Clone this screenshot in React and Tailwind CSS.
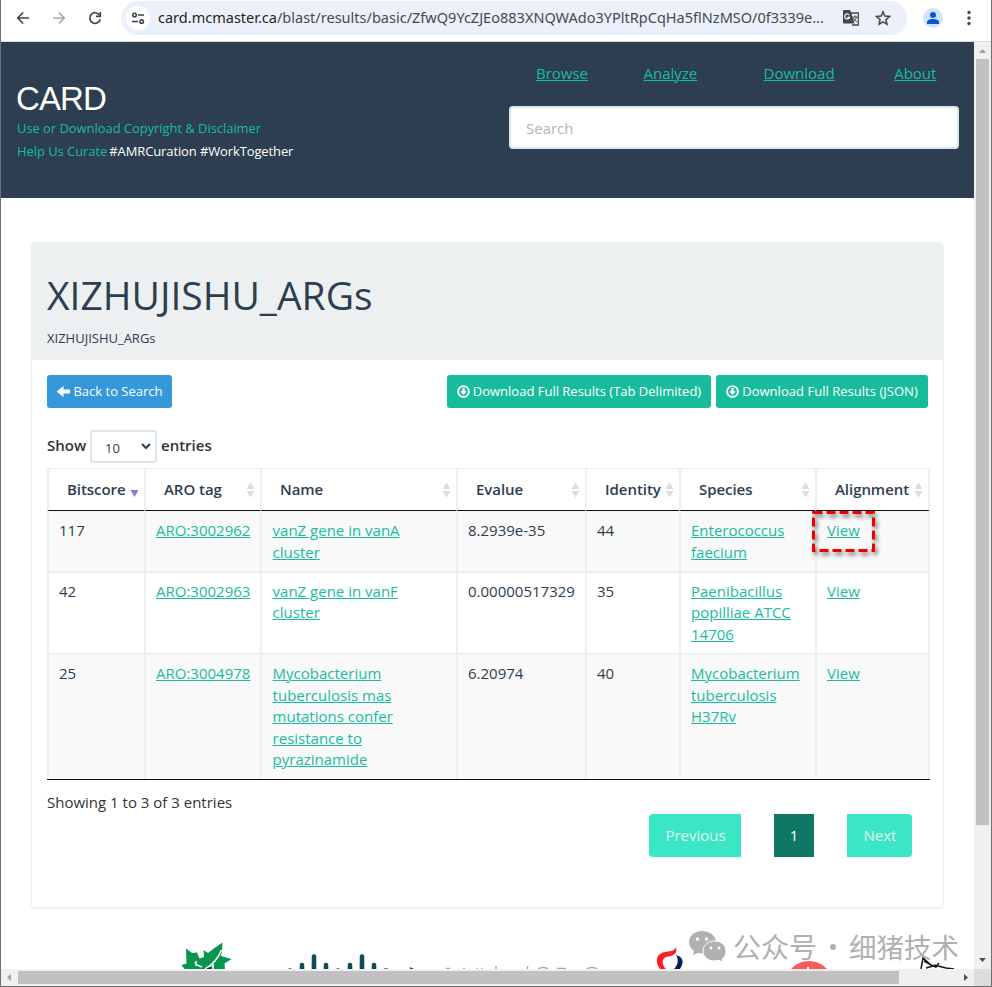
const columns = [
  { label: 'Bitscore', width: 'w-[97px]', sorted: true },
  { label: 'ARO tag', width: 'w-[116px]' },
  { label: 'Name', width: 'w-[196px]' },
  { label: 'Evalue', width: 'w-[129px]' },
  { label: 'Identity', width: 'w-[94px]' },
  { label: 'Species', width: 'w-[136px]' },
  { label: 'Alignment', width: 'w-[115px]' },
];

const rows = [
  {
    bitscore: '117',
    aro: 'ARO:3002962',
    name: ['vanZ gene in vanA', 'cluster'],
    evalue: '8.2939e-35',
    identity: '44',
    species: ['Enterococcus', 'faecium'],
    height: 'h-[62px] [&_td]:pt-[9.300px]',
    marked: true,
  },
  {
    bitscore: '42',
    aro: 'ARO:3002963',
    name: ['vanZ gene in vanF', 'cluster'],
    evalue: '0.00000517329',
    identity: '35',
    species: ['Paenibacillus', 'popilliae ATCC', '14706'],
    height: 'h-[82px] [&_td]:pt-[8px]',
  },
  {
    bitscore: '25',
    aro: 'ARO:3004978',
    name: ['Mycobacterium', 'tuberculosis mas', 'mutations confer', 'resistance to', 'pyrazinamide'],
    evalue: '6.20974',
    identity: '40',
    species: ['Mycobacterium', 'tuberculosis', 'H37Rv'],
    height: 'h-[124px] [&_td]:pt-[8.200px]',
  },
];

const TextLink = ({ children }) => (
  <a className="text-[#18bc9c] underline underline-offset-1 decoration-1 cursor-pointer">{children}</a>
);

const LinkLines = ({ lines }) =>
  lines.map((line) => (
    <div key={line} className="whitespace-nowrap">
      <TextLink>{line}</TextLink>
    </div>
  ));

const SortIcon = ({ sorted }) =>
  sorted ? (
    <svg width="9" height="16" viewBox="0 0 9 16" className="shrink-0">
      <path d="M0.500 8h8L4.500 15z" fill="#7b7fe0" />
    </svg>
  ) : (
    <svg width="9" height="16" viewBox="0 0 9 16" className="shrink-0">
      <path d="M0.500 7h8L4.500 0.500zM0.500 9h8L4.500 15.500z" fill="#dcdcdc" />
    </svg>
  );

const DownloadIcon = () => (
  <svg width="13" height="13" viewBox="0 0 13 13" className="shrink-0">
    <circle cx="6.500" cy="6.500" r="5.400" fill="none" stroke="#fff" strokeWidth="1.800" />
    <path d="M5.300 3h2.400v3.200h2.100L6.500 9.900 3.200 6.200h2.100z" fill="#fff" />
  </svg>
);

const Toolbar = () => (
  <div className="flex h-[42px] shrink-0 items-start border-b border-[#d8dadd] bg-white">
    <div className="flex h-9 w-[120px] shrink-0 items-center pl-[14px]">
      <svg width="90" height="16" viewBox="0 0 90 16" fill="none" stroke="#474747" strokeWidth="1.700">
        <path d="M14 8H3M8.200 2.500L2.700 8l5.500 5.500" />
        <path d="M38 8h11M43.800 2.500L49.300 8l-5.500 5.500" stroke="#a9a9a9" />
        <path d="M84.700 5.300A5.300 5.300 0 1 0 85.300 9.200" />
        <path d="M85.300 2v4.300H81" />
      </svg>
    </div>
    <div className="mt-px flex h-[34px] w-[786px] shrink-0 items-center rounded-full bg-[#ebf0fa] pl-[5px]">
      <div className="flex h-6 w-6 items-center justify-center rounded-full bg-white">
        <svg width="14" height="14" viewBox="0 0 14 14" fill="none" stroke="#3c4043" strokeWidth="1.500">
          <circle cx="3.500" cy="4" r="1.800" />
          <path d="M7 4h6M1 10.500h6" />
          <circle cx="10.700" cy="10.500" r="1.800" />
        </svg>
      </div>
      <div className="ml-2 w-[668px] whitespace-nowrap font-['Noto_Sans','Open_Sans',sans-serif] text-[14.530px] text-[#474a4e]">
        <span className="text-[#1f1f1f]">card.mcmaster.ca</span>/blast/results/basic/ZfwQ9YcZJEo883XNQWAdo3YPltRpCqHa5flNzMSO/0f3339e...
      </div>
      <svg width="18" height="18" viewBox="0 0 18 18" className="ml-4">
        <path d="M1 1h7l1.500 3.500 3 10H2a1 1 0 0 1-1-1z" fill="#474747" />
        <path d="M9 4h7.300v12H10" fill="none" stroke="#474747" strokeWidth="1.300" />
        <path d="M7.300 6.200A2.500 2.500 0 1 0 7.500 8.300H5.300" fill="none" stroke="#fff" strokeWidth="1.200" />
        <path d="M10.500 8h5M13 6.500V8M14.500 8c-.5 2-2 3.500-3.200 4.400M11.500 9c.5 1.500 2 3 3.300 3.700" fill="none" stroke="#474747" />
      </svg>
      <svg width="16" height="16" viewBox="0 0 16 16" className="ml-[15px]" fill="none" stroke="#474747" strokeWidth="1.500">
        <path d="M8 1.800l1.800 4.300 4.700.4-3.600 3.100 1.100 4.600L8 11.800l-4 2.400 1.100-4.600-3.600-3.100 4.700-.4z" />
      </svg>
    </div>
    <div className="ml-4 mt-2 flex h-5 w-5 items-center justify-center rounded-full bg-[#d3e3fd]">
      <svg width="12" height="12" viewBox="0 0 12 12" fill="#0b57d0">
        <circle cx="6" cy="3" r="3" />
        <path d="M0 12V10c0-2 3-3 6-3s6 1 6 3v2z" />
      </svg>
    </div>
    <svg width="4" height="16" viewBox="0 0 4 16" className="ml-[24px] mt-[10px]" fill="#474747">
      <circle cx="2" cy="2.500" r="1.700" />
      <circle cx="2" cy="8" r="1.700" />
      <circle cx="2" cy="13.500" r="1.700" />
    </svg>
  </div>
);

const Header = () => (
  <header className="flex h-[156px] bg-[#2c3e50]">
    <div className="w-[508px] pl-4 pt-[38px]">
      <h1 className="-ml-px font-['Liberation_Sans',sans-serif] text-[33px] leading-[37px] tracking-[-0.900px] text-white">CARD</h1>
      <div className="text-[13px] leading-[23px] tracking-[-0.060px] text-[#18bc9c]">Use or Download Copyright &amp; Disclaimer</div>
      <div className="text-[13px] leading-[23px] tracking-[-0.060px] text-[#18bc9c]">
        Help Us Curate<span className="ml-[2px] tracking-[-0.120px] text-white">#AMRCuration #WorkTogether</span>
      </div>
    </div>
    <div className="w-[450px]">
      <nav className="flex pl-[27px] pt-[20px] leading-[22px]">
        <div className="w-[107.500px]"><TextLink>Browse</TextLink></div>
        <div className="w-[120px]"><TextLink>Analyze</TextLink></div>
        <div className="w-[130.700px]"><TextLink>Download</TextLink></div>
        <div><TextLink>About</TextLink></div>
      </nav>
      <div className="mt-[22px] flex h-[43px] items-center rounded border-2 border-[#dce4ec] bg-white pl-[15px] pt-[2px] text-[#acb6c0]">
        Search
      </div>
    </div>
  </header>
);

const ResultsTable = () => (
  <table className="w-[883px] table-fixed border-separate border-spacing-0 text-left text-[#2c3e50]">
    <thead>
      <tr className="h-[43px]">
        {columns.map((col) => (
          <th
            key={col.label}
            className={`${col.width} border-b border-l-2 border-t border-b-[#111] border-l-[#ecf0f1] border-t-[#ecf0f1] p-0 pl-[18px] pr-[5px] font-semibold last:border-r-2 last:border-r-[#ecf0f1]`}
          >
            <div className="flex items-center justify-between">
              <span className="tracking-[-0.050px]">{col.label}</span>
              <SortIcon sorted={col.sorted} />
            </div>
          </th>
        ))}
      </tr>
    </thead>
    <tbody className="align-top leading-[21.430px] [&_td]:border-b-2 [&_td]:border-l-2 [&_td]:border-[#ecf0f1] [&_td]:p-0 [&_td]:pl-[10px] [&_td:nth-child(3)]:pl-[10.600px] [&_td:last-child]:border-r-2 [&_tr:last-child_td]:border-b-0">
      {rows.map((row) => (
        <tr key={row.aro} className={`${row.height} odd:bg-[#f9f9f9]`}>
          <td>{row.bitscore}</td>
          <td><TextLink>{row.aro}</TextLink></td>
          <td><LinkLines lines={row.name} /></td>
          <td>{row.evalue}</td>
          <td>{row.identity}</td>
          <td><LinkLines lines={row.species} /></td>
          <td className="relative">
            <TextLink>View</TextLink>
            {row.marked && (
              <svg width="76" height="54" viewBox="0 0 76 54" className="absolute -left-[12px] -top-[6px]">
                <rect
                  x="8.500" y="7.500" width="60" height="38"
                  fill="none" stroke="#f00000" strokeWidth="3" strokeDasharray="9 4"
                  className="drop-shadow-[2px_3px_2px_rgba(0,0,0,0.6)]"
                />
              </svg>
            )}
          </td>
        </tr>
      ))}
    </tbody>
  </table>
);

const Panel = () => (
  <section className="ml-[30px] mt-11 h-[666px] w-[913px] rounded border border-[#ecf0f1] bg-white shadow-[0_1px_1px_rgba(0,0,0,0.05)]">
    <div className="h-[117px] bg-[#ecf0f1] pl-[15px] pt-[30px] text-[#2c3e50]">
      <h2 className="text-[39px] leading-[43px] font-normal">XIZHUJISHU_ARGs</h2>
      <div className="mt-[13px] text-[13px] leading-[19px]">XIZHUJISHU_ARGs</div>
    </div>
    <div className="pl-[15px] pt-[15px]">
      <div className="flex w-[881px] gap-[5px] text-[13px] text-white">
        <button className="mr-auto flex h-[33px] w-[125px] items-center justify-center gap-[3px] rounded-[3px] bg-[#3498db]">
          <svg width="14" height="13" viewBox="0 0 14 13" fill="#fff">
            <path d="M0.500 6.500L7.500 1v3.500H14v4H7.500V12z" />
          </svg>
          Back to Search
        </button>
        <button className="flex h-[33px] w-[264px] items-center justify-center gap-[3px] whitespace-nowrap rounded-[3px] bg-[#18bc9c]">
          <DownloadIcon />
          Download Full Results (Tab Delimited)
        </button>
        <button className="flex h-[33px] w-[212px] items-center justify-center gap-[3px] whitespace-nowrap rounded-[3px] bg-[#18bc9c] tracking-[0.030px]">
          <DownloadIcon />
          Download Full Results (JSON)
        </button>
      </div>
      <div className="mt-[22px] flex h-[33px] items-center font-semibold text-[#333]">
        <span className="w-[43px] pb-[2px]">Show</span>
        <div className="flex h-[33px] w-[67px] items-center justify-between rounded-[3px] border-2 border-[#dce4ec] pl-[13px] pr-[4px] text-[13px] font-normal text-[#2c3e50]">
          <span className="pt-[5px]">10</span>
          <svg width="10" height="7" viewBox="0 0 10 7" fill="none" stroke="#2c3e50" strokeWidth="2">
            <path d="M1 1l4 4 4-4" />
          </svg>
        </div>
        <span className="ml-1 pb-[2px]">entries</span>
      </div>
      <div className="mt-[5px] border-b border-[#111] w-[883px]">
        <ResultsTable />
      </div>
      <div className="mt-[11px] leading-[22px] text-[#333]">Showing 1 to 3 of 3 entries</div>
      <div className="mt-px flex w-[865px] justify-end gap-[33px] text-[#e4f5f1]">
        <button className="h-[43px] w-[92px] rounded-l bg-[#3be6c4] pl-px">Previous</button>
        <button className="h-[43px] w-[40px] bg-[#0f7864] text-white">1</button>
        <button className="h-[43px] w-[65px] rounded-r bg-[#3be6c4] pl-px">Next</button>
      </div>
    </div>
  </section>
);

// Only the upper edges of the partner logos are above the scroll bar.
const PartnerLogos = () => (
  <svg width="973" height="61" viewBox="1 908 973 61" className="block">
    <path
      d="M186 948.500l6 4.500 5-.5 2.500 6 4.500-1.500-.5-7 4.500 3 6.500-5 8-5.500-.5 8-1 5.500 10.500 3-7 4.500.5 6H185l-3.500-4.500 5-1.500z"
      fill="#07964b"
    />
    <path d="M195 962l2 3 5 2M196 961v5M205 969c7-4 13-10 16.500-19M213 963v6M208 967l6-1" fill="none" stroke="#fff" strokeWidth="1.500" />
    <path d="M206 969l6-3-1 3z" fill="#0b3d22" />
    <g stroke="#124b60" strokeWidth="4.600" strokeLinecap="round">
      <path d="M302 965v8M314 956.500v17M326 965v8M350 965v8M362 956.500v17M374 965v8" />
      <path d="M290 970.500v3M338 970.500v3M386 970.500v3" />
    </g>
    <path d="M384 968.500h4" stroke="#4e98b1" />
    <path d="M410 967l4 2h-4z" fill="#a00048" />
    <g fill="none" stroke="#a3aab5" strokeWidth="1.500">
      <path d="M446 968.500h4M463 968.500h2M476 968.500h1.500M481 968.500h1.500M557 968.500h9" />
      <path d="M496 966v3M527.500 966v3" />
      <path d="M538 969c2-2 8-2 10 0M587 969c2-2 8-2 10 0" />
    </g>
    <path d="M676 947c2 7-3 9-10 10-5 2-4 8 0 12h-6c-6-8-3-16 5-17 6-1 10-1 11-5z" fill="#ff1c25" />
    <path d="M676 955c8 2 8 8 4 14h-6c4-4 5-9 2-14z" fill="#0b1c5b" />
    <circle cx="809" cy="985" r="24" fill="#f85b5b" />
    <path d="M808 967v2" stroke="#fff" strokeWidth="2" />
    <path d="M921 969l2-11 8 7 5 2 3-4M934 965l12 3 8 1M924 961l9 5-7 2" fill="none" stroke="#171717" strokeWidth="1.500" />
  </svg>
);

const Watermark = () => (
  <div className="absolute left-[687px] top-[929px] flex items-center text-[#b0b0b0]">
    <svg width="40" height="34" viewBox="0 0 40 34">
      <path d="M14 2C6 2 1 7 1 13c0 4 2 7 5 9l-1 4 5-2c10 2 18-3 18-11C28 7 22 2 14 2z" fill="#b0b0b0" />
      <path d="M27 12c-7 0-12 4-12 10s5 10 12 10l4-.7 4 2-1-3.300c3-2 4-5 4-8 0-6-5-10-11-10z" fill="#b0b0b0" stroke="#fff" />
      <g fill="#fff">
        <circle cx="9.500" cy="10" r="1.700" />
        <circle cx="18.500" cy="10" r="1.700" />
        <circle cx="23" cy="19" r="1.400" />
        <circle cx="31" cy="19" r="1.400" />
      </g>
    </svg>
    <div className="ml-[5px] flex whitespace-nowrap font-['Noto_Sans_CJK_SC',sans-serif] text-[28px] leading-[34px] font-normal">
      <span>公众号</span>
      <span className="w-[32px] text-center">·</span>
      <span className="text-[27.500px]">细猪技术</span>
    </div>
  </div>
);

const VerticalScroll = () => (
  <div className="flex w-[17px] shrink-0 flex-col items-center bg-[#f0f0f0]">
    <svg width="17" height="17" viewBox="0 0 17 17">
      <path d="M5 11h7L8.500 7z" fill="#a3a3a3" />
    </svg>
    <div className="h-[766px] w-[13px] bg-[#c1c1c1]" />
    <svg width="17" height="17" viewBox="0 0 17 17" className="mt-auto">
      <path d="M5 6h7l-3.500 4z" fill="#505050" />
    </svg>
  </div>
);

const HorizontalScroll = () => (
  <div className="flex h-[17px] shrink-0 items-center bg-[#f0f0f0]">
    <svg width="17" height="17" viewBox="0 0 17 17">
      <path d="M10 5v7L6 8.500z" fill="#a3a3a3" />
    </svg>
    <div className="h-[13px] w-[881px] bg-[#c1c1c1]" />
    <svg width="17" height="17" viewBox="0 0 17 17" className="ml-auto">
      <path d="M7 5v7l4-3.500z" fill="#505050" />
    </svg>
    <div className="h-[17px] w-[17px] bg-[#dcdcdc]" />
  </div>
);

const App = () => {
  return (
    <div className="relative flex h-[987px] w-[992px] flex-col overflow-hidden border-x border-b border-[#707070] bg-white font-['Open_Sans',sans-serif] text-[15px]">
      <Toolbar />
      <div className="flex h-[927px] shrink-0 overflow-hidden">
        <main className="w-[973px] shrink-0 overflow-hidden">
          <Header />
          <Panel />
          <PartnerLogos />
        </main>
        <VerticalScroll />
      </div>
      <HorizontalScroll />
      <Watermark />
    </div>
  );
};

export default App;
